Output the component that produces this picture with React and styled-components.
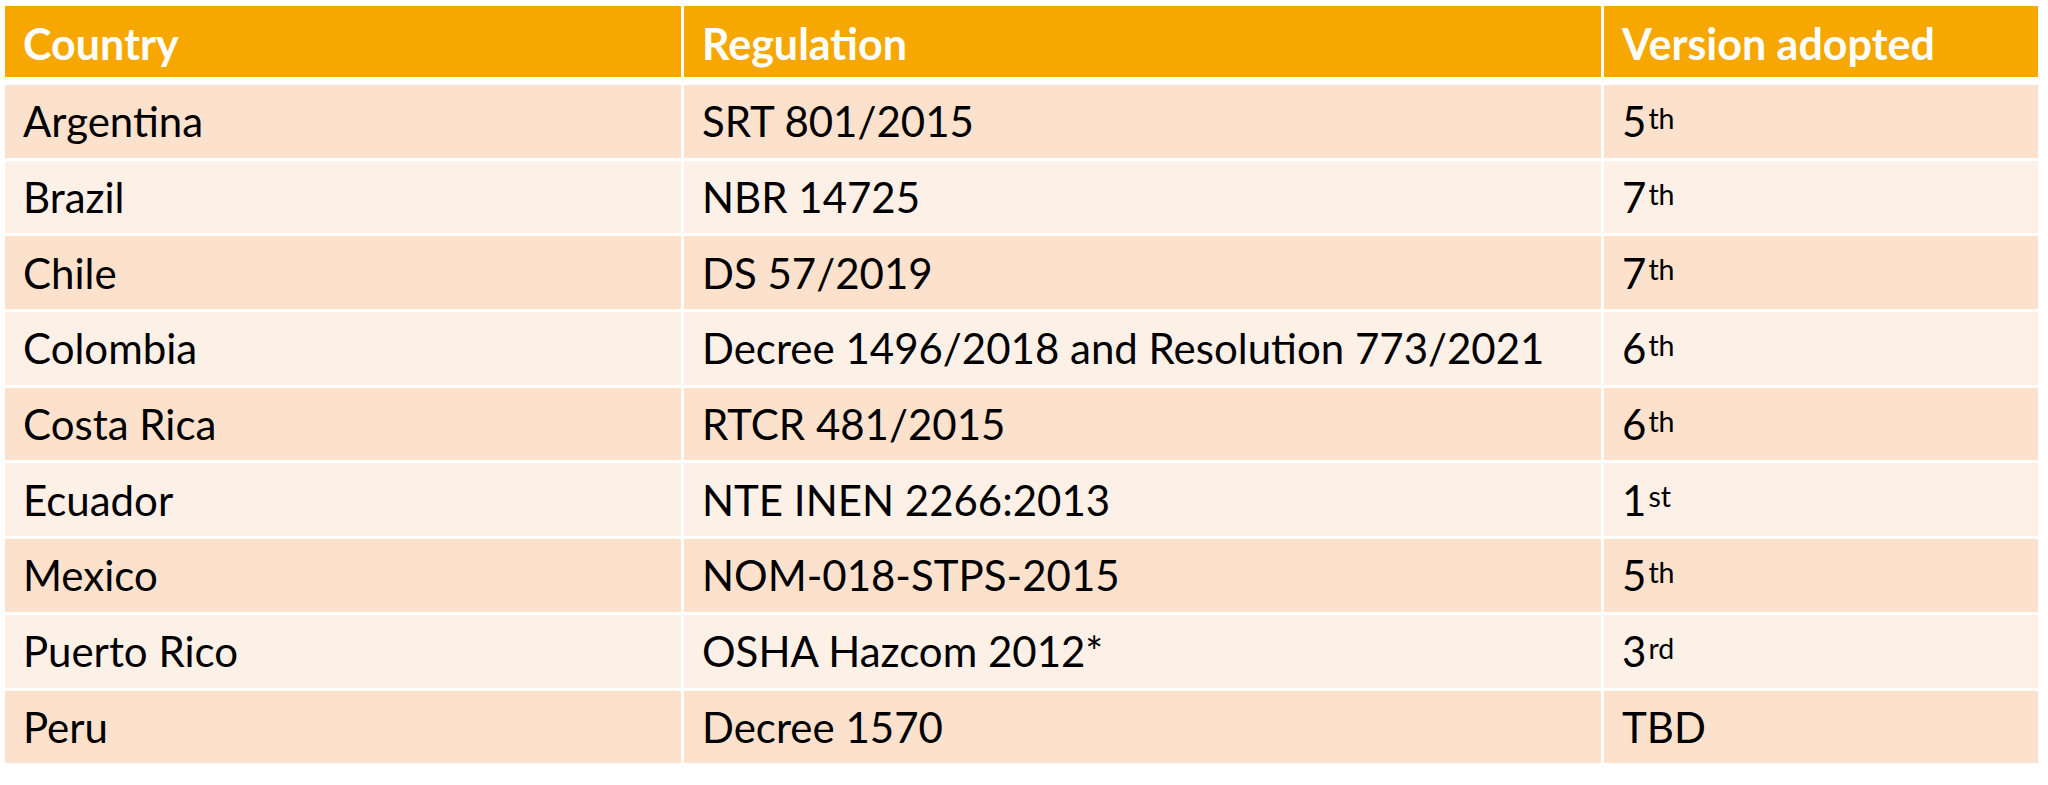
import React from "react";
import styled, { createGlobalStyle } from "styled-components";

const GlobalStyle = createGlobalStyle`
  html, body {
    margin: 0;
    padding: 0;
    background: #ffffff;
  }
  body {
    font-family: Lato, "Open Sans", "Liberation Sans", sans-serif;
  }
`;

const rows = [
  { country: "Argentina", regulation: "SRT 801/2015", num: "5", suffix: "th" },
  { country: "Brazil", regulation: "NBR 14725", num: "7", suffix: "th" },
  { country: "Chile", regulation: "DS 57/2019", num: "7", suffix: "th" },
  {
    country: "Colombia",
    regulation: "Decree 1496/2018 and Resolution 773/2021",
    num: "6",
    suffix: "th",
  },
  { country: "Costa Rica", regulation: "RTCR 481/2015", num: "6", suffix: "th" },
  { country: "Ecuador", regulation: "NTE INEN 2266:2013", num: "1", suffix: "st" },
  { country: "Mexico", regulation: "NOM-018-STPS-2015", num: "5", suffix: "th" },
  { country: "Puerto Rico", regulation: "OSHA Hazcom 2012*", num: "3", suffix: "rd" },
  { country: "Peru", regulation: "Decree 1570", num: "TBD" },
];

export default function App() {
  return (
    <>
      <GlobalStyle />
      <Page>
        <Table>
          <HeadRow>
            <HeadCell>Country</HeadCell>
            <HeadCell>Regulation</HeadCell>
            <HeadCell>Version adopted</HeadCell>
          </HeadRow>
          {rows.map((row, index) => (
            <Row key={row.country}>
              <Cell $light={index % 2 === 1}>{row.country}</Cell>
              <Cell $light={index % 2 === 1}>{row.regulation}</Cell>
              <Cell $light={index % 2 === 1}>
                {row.num}
                {row.suffix && <Ordinal>{row.suffix}</Ordinal>}
              </Cell>
            </Row>
          ))}
        </Table>
      </Page>
    </>
  );
}

const Page = styled.div`
  padding: 6px 0 0 5px;
`;

const Table = styled.div`
  width: 2033px;
  display: flex;
  flex-direction: column;
  gap: 3px;
`;

const HeadRow = styled.div`
  display: grid;
  grid-template-columns: 676px 917px 434px;
  column-gap: 3px;
  margin-bottom: 5px;
`;

const Row = styled(HeadRow)`
  margin-bottom: 0;
`;

const HeadCell = styled.div`
  height: 71px;
  display: flex;
  align-items: center;
  padding: 3px 0 0 18px;
  box-sizing: border-box;
  background: #f7a800;
  color: #ffffff;
  font-weight: 700;
  font-size: 43px;
  line-height: 1;
`;

const Cell = styled.div`
  height: 72.7px;
  display: flex;
  align-items: center;
  padding-left: 18px;
  background: ${(p) => (p.$light ? "#fdf0e7" : "#fce2cd")};
  color: #000000;
  font-size: 42px;
  line-height: 1;
`;

const Ordinal = styled.sup`
  font-size: 0.68em;
  line-height: 0;
  position: relative;
  top: -0.12em;
  margin-left: 2px;
`;
